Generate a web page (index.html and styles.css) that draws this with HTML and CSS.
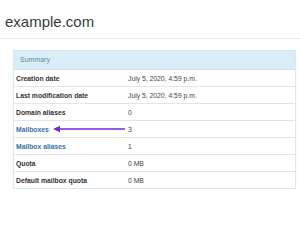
FILE: index.html
```html
<!DOCTYPE html>
<html>
<head>
  <meta charset="UTF-8">
  <title>example.com</title>
  <link rel="stylesheet" href="styles.css">
</head>
<body>
  <h1 class="page-title">example.com</h1>

  <div class="panel">
    <div class="panel-heading">Summary</div>
    <table class="summary">
      <tr>
        <th>Creation date</th>
        <td>July 5, 2020, 4:59 p.m.</td>
      </tr>
      <tr>
        <th>Last modification date</th>
        <td>July 5, 2020, 4:59 p.m.</td>
      </tr>
      <tr>
        <th>Domain aliases</th>
        <td>0</td>
      </tr>
      <tr class="marked">
        <th><a href="#">Mailboxes</a></th>
        <td>3</td>
      </tr>
      <tr>
        <th><a href="#">Mailbox aliases</a></th>
        <td>1</td>
      </tr>
      <tr>
        <th>Quota</th>
        <td>0 MB</td>
      </tr>
      <tr>
        <th>Default mailbox quota</th>
        <td>0 MB</td>
      </tr>
    </table>

    <!-- annotation arrow -->
    <svg class="pointer" width="76" height="8" viewBox="0 0 76 8">
      <line x1="3" y1="4" x2="72" y2="4" stroke="#7a25dc" stroke-width="1.6"/>
      <path d="M0 4 L7 0.8 L7 7.2 Z" fill="#7a25dc"/>
    </svg>
  </div>
</body>
</html>
```

FILE: styles.css
```css
body {
  margin: 0;
  background: #fff;
  font-family: "Liberation Sans", Arial, sans-serif;
  color: #333;
}

.page-title {
  margin: 0;
  padding: 14px 0 0 5px;
  height: 24px;
  font-size: 15px;
  line-height: 16px;
  font-weight: normal;
  color: #3a3a3a;
  border-bottom: 1px solid #eee;
}

.panel {
  position: relative;
  margin: 11px 4px 0 13px;
  border: 1px solid #d6e9f0;
  box-shadow: 0 1px 2px rgba(0,0,0,0.05);
  background: #fff;
}

.panel-heading {
  height: 18px;
  line-height: 18px;
  padding-left: 6px;
  background: #d9edf7;
  color: #5b8bab;
  font-size: 7px;
  border-bottom: 1px solid #cfe4ee;
}

.summary {
  width: 100%;
  border-collapse: collapse;
  font-size: 6.8px;
}

.summary th,
.summary td {
  height: 16px;
  padding: 0 2px;
  text-align: left;
  border-top: 1px solid #e4e4e4;
}

.summary tr:first-child th,
.summary tr:first-child td {
  border-top: none;
}

.summary th {
  width: 108px;
  font-weight: bold;
  color: #333;
}

.summary td {
  color: #444;
}

.summary a {
  color: #3a6fa8;
  text-decoration: none;
}

.pointer {
  position: absolute;
  left: 39px;
  top: 74px;
}
```
